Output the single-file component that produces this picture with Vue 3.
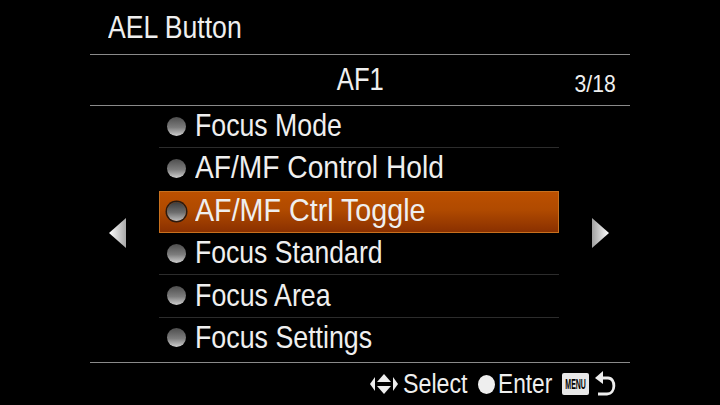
<script setup>
const items = [
  { text: 'Focus Mode', fit: 0.834 },
  { text: 'AF/MF Control Hold', fit: 0.88 },
  { text: 'AF/MF Ctrl Toggle', fit: 0.896 },
  { text: 'Focus Standard', fit: 0.83 },
  { text: 'Focus Area', fit: 0.838 },
  { text: 'Focus Settings', fit: 0.837 }
]
const selected = 2
</script>

<template>
  <div class="screen">
    <header class="title"><span class="squeeze">AEL Button</span></header>
    <div class="tabbar">
      <span class="tab squeeze-c">AF1</span>
      <span class="page squeeze-r">3/18</span>
    </div>
    <main class="middle">
      <svg class="arrow" width="20" height="32" viewBox="0 0 20 32">
        <defs>
          <linearGradient id="al" x1="0" x2="1" y1="0" y2="0">
            <stop offset="0" stop-color="#fff" /><stop offset="1" stop-color="#a8a8a8" />
          </linearGradient>
        </defs>
        <polygon points="1,16 18,1 18,31" fill="url(#al)" />
      </svg>
      <ul class="list">
        <li v-for="(item, i) in items" :key="item.text" class="row" :class="{ sel: i === selected }">
          <span class="dot"></span>
          <span class="label" :style="{ transform: `scaleX(${item.fit})` }">{{ item.text }}</span>
        </li>
      </ul>
      <svg class="arrow" width="20" height="32" viewBox="0 0 20 32">
        <defs>
          <linearGradient id="ar" x1="0" x2="1" y1="0" y2="0">
            <stop offset="0" stop-color="#a0a0a0" /><stop offset="1" stop-color="#fff" />
          </linearGradient>
        </defs>
        <polygon points="2,1 19,16 2,31" fill="url(#ar)" />
      </svg>
    </main>
    <footer class="footer">
      <svg class="cross" width="30" height="20" viewBox="0 0 30 20">
        <polygon points="1,10 6,3 6,17" fill="#eee" />
        <polygon points="29,10 24,3 24,17" fill="#eee" />
        <polygon points="15,0 22,8 8,8" fill="#eee" />
        <polygon points="15,20 22,12 8,12" fill="#eee" />
      </svg>
      <span class="hint h-select">Select</span>
      <span class="enter-dot"></span>
      <span class="hint h-enter">Enter</span>
      <span class="menu-key"><span class="menu-text">MENU</span></span>
      <svg class="back" width="22" height="26" viewBox="0 0 22 26">
        <path d="M1 7 L9 0 L9 13 Z" fill="#eee" />
        <path d="M8 7 H14 C22 7 22 23 13 23 H4" fill="none" stroke="#eee" stroke-width="2.8" />
      </svg>
    </footer>
  </div>
</template>

<style>
html, body { margin: 0; background: #000; }
</style>

<style scoped>
.screen {
  width: 720px;
  height: 405px;
  box-sizing: border-box;
  padding: 0 90px;
  background: #000;
  color: #efefef;
  font-family: "Liberation Sans", Arial, sans-serif;
  display: flex;
  flex-direction: column;
  overflow: hidden;
}
.squeeze { display: inline-block; transform: scaleX(0.832); transform-origin: left center; white-space: nowrap; }
.squeeze-c { display: inline-block; transform: scaleX(0.8); transform-origin: center; }
.squeeze-r { display: inline-block; transform: scaleX(0.88); transform-origin: right center; }
.title {
  height: 54px;
  flex: none;
  border-bottom: 1px solid #8a8a8a;
  padding-left: 18px;
  font-size: 32px;
  line-height: 54px;
}
.tabbar {
  height: 50px;
  flex: none;
  border-bottom: 1px solid #8a8a8a;
  position: relative;
  display: flex;
  align-items: center;
  justify-content: center;
}
.tab { font-size: 32px; position: relative; top: -1px; }
.page { position: absolute; right: 14px; top: 14px; font-size: 24px; line-height: 30px; }
.middle {
  flex: 1;
  display: flex;
  align-items: center;
  padding-left: 18px;
}
.arrow { flex: none; margin-bottom: 3px; }
.list {
  list-style: none;
  align-self: flex-start;
  margin: 0 31px;
  padding: 0;
  width: 400px;
  flex: none;
}
.row {
  height: 41.3px;
  border-bottom: 1px solid #2c2c2c;
  display: flex;
  align-items: center;
  font-size: 32px;
}
.row:last-child { border-bottom: 0; }
.row:nth-child(2) { border-bottom-color: transparent; }
.dot {
  flex: none;
  width: 19px;
  height: 19px;
  margin-left: 8px;
  margin-right: 9px;
  margin-bottom: 1px;
  border-radius: 50%;
  background: linear-gradient(#4e4e4e, #7c7c7c 55%, #cfcfcf);
}
.label {
  display: inline-block;
  line-height: 40px;
  margin-bottom: 3px;
  white-space: nowrap;
  transform-origin: left center;
}
.sel {
  height: 42.6px;
  box-sizing: border-box;
  border: 1px solid #c8701e;
  background: linear-gradient(#bc5000, #b04a00 45%, #8a3000);
}
.sel .dot {
  margin-left: 7px;
  background: linear-gradient(#3c3c3c, #6e6e6e 55%, #bdbdbd);
  box-shadow: 0 0 0 1.5px #2a1a10;
}
.footer {
  height: 42px;
  flex: none;
  border-top: 1px solid #8a8a8a;
  display: flex;
  align-items: center;
  justify-content: flex-end;
  padding-right: 14px;
}
.hint {
  display: inline-block;
  font-size: 27px;
  transform-origin: left center;
  white-space: nowrap;
}
.h-select { margin-left: 4px; width: 65px; transform: scaleX(0.86); }
.enter-dot { width: 17px; height: 19px; border-radius: 50%; background: #eee; margin-left: 10px; flex: none; }
.h-enter { margin-left: 3px; width: 58px; transform: scaleX(0.84); }
.menu-key {
  flex: none;
  width: 27px;
  height: 22px;
  margin-left: 6px;
  background: #e8e8e8;
  border-radius: 2px;
  overflow: hidden;
  display: flex;
  align-items: center;
  justify-content: center;
}
.menu-text { color: #000; font-size: 14px; font-weight: 700; transform: scaleX(0.5); white-space: nowrap; }
.back { flex: none; margin-left: 5px; }
</style>
